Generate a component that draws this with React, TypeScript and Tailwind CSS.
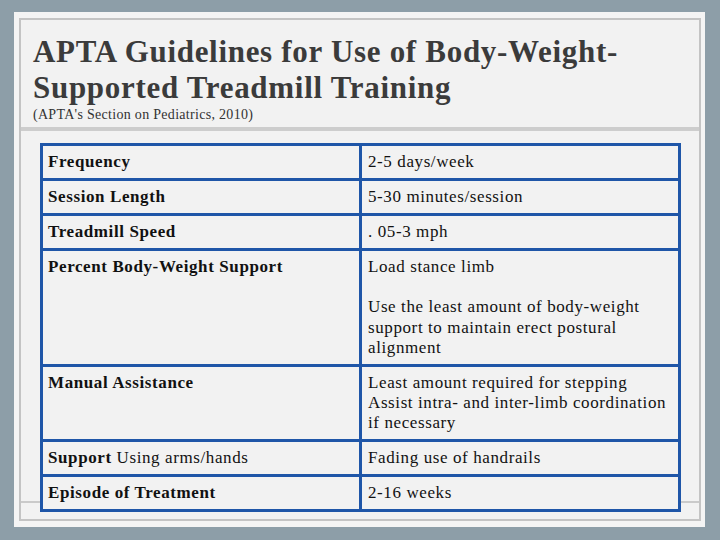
const rows: { label: React.ReactNode; value: React.ReactNode }[] = [
  { label: <b>Frequency</b>, value: '2-5 days/week' },
  { label: <b>Session Length</b>, value: '5-30 minutes/session' },
  { label: <b>Treadmill Speed</b>, value: '. 05-3 mph' },
  {
    label: <b>Percent Body-Weight Support</b>,
    value: (
      <>
        Load stance limb
        <br />
        <br />
        Use the least amount of body-weight support to maintain erect postural alignment
      </>
    ),
  },
  {
    label: <b>Manual Assistance</b>,
    value: (
      <>
        Least amount required for stepping
        <br />
        Assist intra- and inter-limb coordination if necessary
      </>
    ),
  },
  {
    label: (
      <>
        <b>Support</b> Using arms/hands
      </>
    ),
    value: 'Fading use of handrails',
  },
  { label: <b>Episode of Treatment</b>, value: '2-16 weeks' },
];

export default function App() {
  return (
    <div className="w-[720px] h-[540px] bg-[#8d9ea8] pt-[12px] pl-[14px] overflow-hidden">
      <div className="w-[691px] h-[515px] bg-[#f4f4f4] pt-[6px] pl-[5px]">
        <div className="relative w-[682px] h-[503px] border-2 border-[#c4c4c4] bg-[#f2f2f2] flex flex-col font-['Liberation_Serif',serif]">
          {/* title */}
          <div className="h-[107px] pl-[12px] pt-[14px] text-[#3b3b3b]">
            <h1 className="text-[31px] leading-[36px] font-bold tracking-[0.7px]">
              APTA Guidelines for Use of Body-Weight-
              <br />
              Supported Treadmill Training
            </h1>
            <p className="text-[14px] leading-[18px] tracking-[0.3px] text-[#333]">
              (APTA's Section on Pediatrics, 2010)
            </p>
          </div>
          <div className="h-[4px] bg-[#cdcdcd]" />

          {/* footer line behind the table */}
          <div className="absolute left-0 right-0 top-[481px] h-[2px] bg-[#cacaca]" />

          <div className="relative pl-[19px] pt-[12px]">
            <table className="w-[641px] border-collapse table-fixed text-[17px] leading-[20.3px] tracking-[0.6px] text-[#111] bg-[#f2f2f2]">
              <tbody>
                {rows.map((r, i) => (
                  <tr key={i}>
                    <td className="w-1/2 border-[3px] border-[#1f56a8] align-top pl-[5px] pr-[4px] pt-[6px] pb-[5.6px]">
                      {r.label}
                    </td>
                    <td className="w-1/2 border-[3px] border-[#1f56a8] align-top pl-[6px] pr-[6px] pt-[6px] pb-[5.6px]">
                      {r.value}
                    </td>
                  </tr>
                ))}
              </tbody>
            </table>
          </div>
        </div>
      </div>
    </div>
  );
}
